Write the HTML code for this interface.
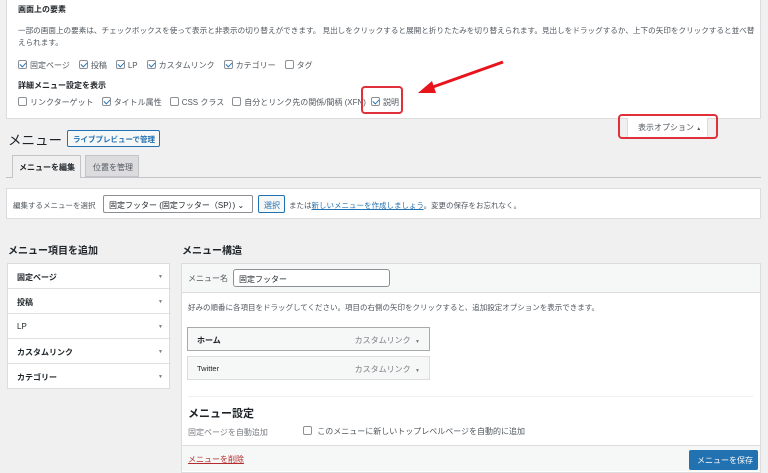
<!DOCTYPE html>
<html><head><meta charset="utf-8"><style>
*{box-sizing:border-box;margin:0;padding:0}
body{width:768px;height:471px;overflow:hidden;background:#f0f0f1;font-family:"Liberation Sans","Noto Sans CJK JP",sans-serif;color:#1d2327;position:relative;font-size:8px}
.a{position:absolute;white-space:nowrap}
.cb{display:inline-block;width:9px;height:9px;border:1px solid #8c8f94;border-radius:2px;vertical-align:-1px;margin-right:3px;background:#fff;position:relative}
.cb.c::after{content:"";position:absolute;left:2px;top:0px;width:3px;height:5px;border:solid #2271b1;border-width:0 1.5px 1.5px 0;transform:rotate(45deg)}
.row span{margin-right:9px}
.acc{position:absolute;left:0;width:163px;height:25px;border-bottom:1px solid #e0e0e0;font-weight:bold;font-size:8px;padding:8px 0 0 9px}
.acc::after{content:"▼";position:absolute;right:8px;top:10px;font-size:5px;color:#787c82}
</style></head><body>
<div class="a" style="left:6px;top:-2px;width:755px;height:121px;background:#fff;border:1px solid #dcdcde"></div>
<div class="a" style="left:18px;top:4px;font-weight:bold;font-size:8px">画面上の要素</div>
<div class="a" style="left:18px;top:25px;font-size:7.6px;color:#50575e;line-height:12px;white-space:normal;width:740px">一部の画面上の要素は、チェックボックスを使って表示と非表示の切り替えができます。 見出しをクリックすると展開と折りたたみを切り替えられます。見出しをドラッグするか、上下の矢印をクリックすると並べ替えられます。</div>
<div class="a row" style="left:18px;top:60px;color:#50575e"><span><i class="cb c"></i>固定ページ</span><span><i class="cb c"></i>投稿</span><span><i class="cb c"></i>LP</span><span><i class="cb c"></i>カスタムリンク</span><span><i class="cb c"></i>カテゴリー</span><span><i class="cb"></i>タグ</span></div>
<div class="a" style="left:18px;top:80px;font-weight:bold">詳細メニュー設定を表示</div>
<div class="a row" style="left:18px;top:97px;color:#50575e"><span style="margin-right:8px"><i class="cb"></i>リンクターゲット</span><span style="margin-right:8px"><i class="cb c"></i>タイトル属性</span><span style="margin-right:8px"><i class="cb"></i>CSS クラス</span><span style="margin-right:5px"><i class="cb"></i>自分とリンク先の関係/間柄 (XFN)</span><span><i class="cb c"></i>説明</span></div>
<div class="a" style="left:361px;top:86px;width:42px;height:28px;border:2px solid #e0303a;border-radius:4px"></div>
<svg class="a" style="left:410px;top:55px" width="100" height="45"><line x1="93" y1="7" x2="20" y2="33" stroke="#e8141c" stroke-width="3"/><polygon points="8,38 22,26 26,38" fill="#e8141c"/></svg>
<div class="a" style="left:627px;top:118px;width:81px;height:20px;background:#fff;border:1px solid #dcdcde;border-top:none;color:#50575e;font-size:8px;padding:4px 0 0 10px">表示オプション <span style="font-size:5px">▲</span></div>
<div class="a" style="left:618px;top:114px;width:100px;height:25px;border:2px solid #e0303a;border-radius:4px"></div>
<div class="a" style="left:8px;top:129px;font-size:13.5px;color:#1d2327">メニュー</div>
<div class="a" style="left:67px;top:130px;width:93px;height:17px;border:1px solid #2271b1;border-radius:2px;color:#2271b1;font-size:7.5px;font-weight:bold;padding:3px 0 0 5px;background:#f6f7f7">ライブプレビューで管理</div>
<div class="a" style="left:6px;top:177px;width:755px;border-top:1px solid #c3c4c7"></div>
<div class="a" style="left:12px;top:155px;width:69px;height:23px;background:#f0f0f1;border:1px solid #c3c4c7;border-bottom:none;font-weight:bold;padding:6px 0 0 6px">メニューを編集</div>
<div class="a" style="left:85px;top:155px;width:54px;height:22px;background:#dcdcde;border:1px solid #c3c4c7;color:#50575e;padding:6px 0 0 7px">位置を管理</div>
<div class="a" style="left:6px;top:188px;width:755px;height:31px;background:#fff;border:1px solid #dcdcde"></div>
<div class="a" style="left:13px;top:200px;color:#50575e;font-size:7.5px">編集するメニューを選択</div>
<div class="a" style="left:103px;top:195px;width:150px;height:18px;border:1px solid #8c8f94;border-radius:2px;background:#fff;padding:4px 0 0 5px">固定フッター (固定フッター（SP）) ⌄</div>
<div class="a" style="left:258px;top:195px;width:27px;height:18px;border:1px solid #2271b1;border-radius:2px;color:#2271b1;background:#f6f7f7;padding:4px 0 0 5px">選択</div>
<div class="a" style="left:289px;top:200px;color:#50575e;font-size:7.5px">または<u style="color:#2271b1">新しいメニューを作成しましょう</u>。変更の保存をお忘れなく。</div>
<div class="a" style="left:8px;top:242px;font-weight:bold;font-size:10px">メニュー項目を追加</div>
<div class="a" style="left:182px;top:242px;font-weight:bold;font-size:10px">メニュー構造</div>
<div class="a" style="left:7px;top:263px;width:163px;height:126px;background:#fff;border:1px solid #dcdcde">
<div class="acc" style="top:0">固定ページ</div><div class="acc" style="top:25px">投稿</div><div class="acc" style="top:50px;font-weight:normal">LP</div><div class="acc" style="top:75px">カスタムリンク</div><div class="acc" style="top:100px;border:none">カテゴリー</div></div>
<div class="a" style="left:181px;top:263px;width:580px;height:210px;background:#fff;border:1px solid #dcdcde"></div>
<div class="a" style="left:182px;top:264px;width:578px;height:29px;background:#f6f7f7;border-bottom:1px solid #dcdcde"></div>
<div class="a" style="left:188px;top:273px;color:#50575e">メニュー名</div>
<div class="a" style="left:233px;top:269px;width:157px;height:18px;border:1px solid #8c8f94;border-radius:3px;background:#fff;padding:4px 0 0 5px">固定フッター</div>
<div class="a" style="left:188px;top:302px;color:#50575e;font-size:7.5px">好みの順番に各項目をドラッグしてください。項目の右側の矢印をクリックすると、追加設定オプションを表示できます。</div>
<div class="a" style="left:187px;top:327px;width:243px;height:24px;background:#f6f7f7;border:1px solid #a7aaad;font-weight:bold;padding:7px 0 0 9px">ホーム<span style="position:absolute;right:9px;top:7px;font-weight:normal;color:#787c82">カスタムリンク &nbsp;<span style="font-size:5px">▼</span></span></div>
<div class="a" style="left:187px;top:356px;width:243px;height:24px;background:#f6f7f7;border:1px solid #dcdcde;font-size:7.5px;padding:7px 0 0 9px">Twitter<span style="position:absolute;right:9px;top:7px;color:#787c82;font-size:8px">カスタムリンク &nbsp;<span style="font-size:5px">▼</span></span></div>
<div class="a" style="left:188px;top:396px;width:565px;border-top:1px solid #f0f0f1"></div>
<div class="a" style="left:188px;top:405px;font-weight:bold;font-size:11px">メニュー設定</div>
<div class="a" style="left:188px;top:427px;color:#787c82">固定ページを自動追加</div>
<div class="a" style="left:303px;top:426px;color:#50575e"><i class="cb"></i> このメニューに新しいトップレベルページを自動的に追加</div>
<div class="a" style="left:182px;top:445px;width:578px;height:26px;background:#f6f7f7;border-top:1px solid #dcdcde"></div>
<div class="a" style="left:188px;top:454px;color:#b32d2e;text-decoration:underline">メニューを削除</div>
<div class="a" style="left:689px;top:450px;width:69px;height:20px;background:#2271b1;border-radius:2px;color:#fff;padding:5px 0 0 8px">メニューを保存</div>
</body></html>
